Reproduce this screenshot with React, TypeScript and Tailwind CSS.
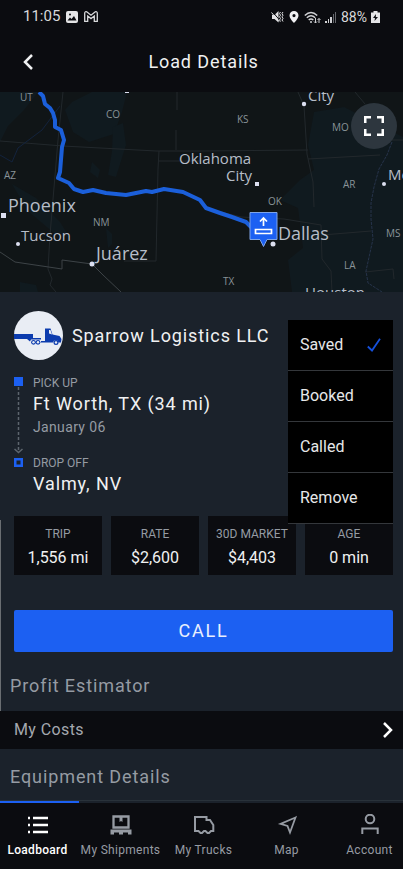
import React from "react";

const stats = [
  { label: "TRIP", value: "1,556 mi" },
  { label: "RATE", value: "$2,600" },
  { label: "30D MARKET", value: "$4,403" },
  { label: "AGE", value: "0 min" },
];

function StatusBar() {
  return (
    <div className="flex h-[34px] items-center justify-between px-[23px] text-sm text-[#d8d9db]">
      <div className="flex items-center gap-[6px]">
        <span className="text-[15px]">11:05</span>
        <svg width="12" height="12" viewBox="0 0 12 12" aria-hidden="true">
          <rect width="12" height="12" rx="2" fill="#e4e4e6" />
          <path d="M1.5 9.5 4 6.5l1.5 1.5L8 5l2.500 4.500z" fill="#0b0c10" />
          <circle cx="4" cy="3.500" r="1" fill="#0b0c10" />
        </svg>
        <svg width="14" height="11" viewBox="0 0 14 11" fill="none" stroke="#d8d9db" strokeWidth="1.300" aria-hidden="true">
          <path d="M.7 10.300V2.200C.7.700 2.100.300 3 1l4 3.200L11 1c.9-.7 2.300-.3 2.300 1.200v8.100h-3V5L7 7.600 3.700 5v5.300z" />
        </svg>
      </div>
      <div className="flex items-center gap-[4px]">
        <svg width="13" height="12" viewBox="0 0 13 12" fill="#e4e4e6" aria-hidden="true">
          <path d="M1 4h2.500L7.500 0v11.500l-4-3.500H1z" />
          <path d="M1.500.800 9 9.500" stroke="#0b0c10" strokeWidth="1" />
          <path d="M.5 1.500 8 10.500M9.500 1l-1 1.500 1 1.700-1 1.600 1 1.700-1 1.500 1 1.500M12 1l-1 1.500 1 1.700-1 1.600 1 1.700-1 1.500 1 1.500" fill="none" stroke="#e4e4e6" />
        </svg>
        <svg width="12" height="12" viewBox="0 0 12 12" aria-hidden="true">
          <path fillRule="evenodd" d="M6 0a4.500 4.500 0 0 1 4.500 4.500C10.500 7.500 6 12 6 12S1.500 7.500 1.500 4.500A4.500 4.500 0 0 1 6 0m0 3a1.600 1.600 0 1 0 0 3.200A1.600 1.600 0 0 0 6 3" fill="#f0f0f2" />
        </svg>
        <svg width="17" height="13" viewBox="0 0 17 13" fill="none" stroke="#d0d1d4" strokeWidth="1.500" aria-hidden="true">
          <path d="M.8 4.500q6.200-6 12.400 0M2.800 6.800q4.200-4 8.400 0M4.700 9q2.300-2 4.600 0M7 10v2" />
          <path d="M11.500 7v5M10 10.500l1.500 1.500 1.500-1.500M15 12V7.500M13.500 9 15 7.500 16.500 9" strokeWidth="1" />
        </svg>
        <svg width="12" height="12" viewBox="0 0 12 12" aria-hidden="true">
          <path d="M0 10h2v2H0zM3 8h1v4H3zM5 6h2v6H5z" fill="#d0d1d4" />
          <path d="M8 3h1v9H8zM10 1h1v11h-1z" fill="#66686d" />
        </svg>
        <span>88%</span>
        <svg width="9" height="12" viewBox="0 0 9 12" aria-hidden="true">
          <path d="M2.500 0h4v1.500H9V12H0V1.500h2.500z" fill="#e4e4e6" />
          <path d="M5 3 2 7h2l-.5 3L7 6H4.800z" fill="#0b0c10" />
        </svg>
      </div>
    </div>
  );
}

function LoadMap() {
  return (
    <section aria-label="Route map" className="relative h-[200px] overflow-hidden bg-[#101517]">
      <svg
        className="h-full w-full font-['Open_Sans','Noto_Sans',sans-serif]"
        viewBox="0 0 403 200"
        preserveAspectRatio="xMidYMid slice"
        role="img"
        aria-label="Route from Fort Worth to Nevada"
      >
        <g fill="#101a1f">
          <path d="M0 0h38L24 18 8 34 0 50zM72 10l20-10h35l-5 20-8 22-25 8-16-10-8-22z" />
          <path d="M113 35l10-4 3 22-10 32-8-2 4-24zM92 70l8 8-2 8-8-6zM12 92l24 14 24 24 10 16-16-5-26-22z" />
          <path d="M314 20l30-5 59 30v155H292l-4-32 15-12-5-40-18-8 20-20 14-10-6-25z" />
          <path d="M106 136l6 6v10l-4 4zM20 190l16 3 2 7H20z" />
        </g>
        <g fill="none" stroke="#22282c">
          <path d="M0 49l63 5 93 5h45l107-1M308 67l72-4M63 0l-5 48-8 95-2 34 4 10-2 6 6 7M159 59l-1 18-2 92h-32M159 69h42M177 0v18M176 38v20" />
          <path d="M298 0l6 14 3 48 6 28 1 25M209 117l32 8 43 2 37 6 1 34 9 12 1 21M322 143l49-4M365 180l28-3 1 10" />
          <path d="M0 160l15 10 47 7v-9l30 4 11 11 18 17" stroke="#3d4347" />
          <path d="M392 50l-5 13-8 14-5 18-3 16v16l2 20-7 32 2 12 14 9" stroke="#26334a" strokeDasharray="3 1" />
          <path d="M60 14L42 38 26 50 18 56 12 70 0 63" stroke="#13233d" />
          <path d="M392 48h11M355 0l10 12" />
        </g>
        <path
          d="M39 0 43 4 45 12 50 16 53 21 55 28V35L61 38 64 48 62 55 60 80 58 86 69 91 74 97 83 100 93 98 106 101 126 103 146 99 152 100 164 97 183 100 200 108 206 116 220 121 232 125 246 130 252 136"
          fill="none"
          stroke="#1b5fda"
          strokeWidth="4"
          strokeLinejoin="round"
        />
        <g fill="#899398" fontSize="10" fontWeight="500">
          <text x="20" y="9">UT</text>
          <text x="106" y="26">CO</text>
          <text x="237" y="31">KS</text>
          <text x="332" y="39">MO</text>
          <text x="4" y="87">AZ</text>
          <text x="93" y="134">NM</text>
          <text x="268" y="113">OK</text>
          <text x="343" y="96">AR</text>
          <text x="386" y="145">MS</text>
          <text x="344" y="177">LA</text>
          <text x="223" y="193">TX</text>
        </g>
        <g fill="#b6bdc8" fontSize="15" fontWeight="500">
          <text x="179" y="72">Oklahoma</text>
          <text x="226" y="89">City</text>
          <text x="308" y="9">City</text>
          <text x="388" y="88">Memphis</text>
          <text x="21" y="149">Tucson</text>
          <text x="305" y="206">Houston</text>
        </g>
        <g fill="#b6bdc8" fontSize="18" fontWeight="500">
          <text x="8" y="120">Phoenix</text>
          <text x="96" y="168">Juárez</text>
          <text x="278" y="148">Dallas</text>
        </g>
        <g fill="#dcdff0">
          <path d="M1 121h5v5H1zM255 90h4v4h-4zM125 0h4v1h-4z" />
          <circle cx="18" cy="152" r="2" />
          <circle cx="92" cy="172" r="2.500" />
          <circle cx="304" cy="12" r="2.200" />
          <circle cx="384" cy="92" r="2" />
          <circle cx="273" cy="152" r="2.500" />
        </g>
        <path d="M250 120.500h27v27h-10l-3.500 7-3.500-7h-10z" fill="#1c60f2" stroke="#7ea4e8" />
        <path d="M255.500 137.500h16v4h-16zM263.500 134v-8M260 129.500l3.500-3.500 3.500 3.500" fill="none" stroke="#fff" strokeWidth="1.700" />
      </svg>
      <button
        type="button"
        aria-label="Full screen map"
        className="absolute top-[11px] right-[6px] flex size-[46px] items-center justify-center rounded-full bg-[#2d363e]"
      >
        <svg width="20" height="20" viewBox="0 0 20 20" fill="none" stroke="#fff" strokeWidth="2.500" aria-hidden="true">
          <path d="M1.250 7V1.250H7M13 1.250h5.750V7M18.750 13v5.750H13M7 18.750H1.250V13" />
        </svg>
      </button>
    </section>
  );
}

function CarrierLogo() {
  return (
    <svg className="shrink-0" width="49" height="49" viewBox="0 0 49 49" role="img" aria-label="Truck">
      <circle cx="24.500" cy="24.500" r="24.500" fill="#e9edf4" />
      <g fill="#0c3cae">
        <path d="M0 23h19v4h8v1.500H17l-1 2-3-2.500H0zM27 30h4V17.500h5.500l2 6 7 1.500 2 3-.5 3.500h-2.500a2.800 2.800 0 0 0-5.500 0H27z" />
        <circle cx="19.500" cy="31.300" r="2.400" />
        <circle cx="24" cy="31.300" r="2.400" />
        <circle cx="42" cy="31.500" r="2.500" />
      </g>
      <g fill="#e9edf4">
        <path d="M35 19h1.500l1.500 4.500-3-1z" />
        <circle cx="19.500" cy="31.300" r="1.200" />
        <circle cx="24" cy="31.300" r="1.200" />
        <circle cx="42" cy="31.500" r="1.200" />
      </g>
    </svg>
  );
}

function StatusMenu() {
  return (
    <div role="menu" className="absolute top-[28px] right-[10px] w-[105px] bg-black text-base text-[#e6e7e8]">
      {["Saved", "Booked", "Called", "Remove"].map((item) => (
        <button
          key={item}
          type="button"
          role="menuitem"
          className="flex h-[51px] w-full items-center justify-between border-b border-[#34373b] px-3"
        >
          {item}
          {item === "Saved" && (
            <svg width="14" height="14" viewBox="0 0 14 14" fill="none" stroke="#1550dc" strokeWidth="1.800" aria-hidden="true">
              <path d="M.8 8.500 5 12.500 13 .800" />
            </svg>
          )}
        </button>
      ))}
    </div>
  );
}

function Stops() {
  return (
    <div className="mt-4 flex gap-[10px]">
      <svg className="mt-[1px] shrink-0" width="9" height="91" viewBox="0 0 9 91" fill="none" aria-hidden="true">
        <path d="M0 0h9v9H0z" fill="#1c60f2" />
        <path d="M4.500 10v65" stroke="#5d656e" strokeWidth="1.500" strokeDasharray="3 2" />
        <path d="M.5 72l4 3.500 4-3.500" stroke="#5d656e" strokeWidth="1.500" />
        <path d="M1.250 82.250h6.500v6.500h-6.500z" stroke="#1c60f2" strokeWidth="2.500" />
      </svg>
      <dl className="text-[#959ba3]">
        <dt className="text-xs leading-[14px]">PICK UP</dt>
        <dd className="mt-[2px] text-lg leading-6 tracking-wider text-[#f0f1f2]">Ft Worth, TX (34 mi)</dd>
        <dd className="text-sm leading-[22px] tracking-wide">January 06</dd>
        <dt className="mt-[18px] text-xs leading-[14px]">DROP OFF</dt>
        <dd className="mt-[2px] text-lg leading-6 tracking-wider text-[#f0f1f2]">Valmy, NV</dd>
      </dl>
    </div>
  );
}

const tabs = [
  {
    label: "Loadboard",
    icon: <path d="M1 4h2M1 11h2M1 18h2M6 4h15M6 11h15M6 18h15" strokeWidth="2.500" />,
  },
  {
    label: "My Shipments",
    icon: (
      <>
        <path d="M3.500 2.500h15v11h-15z" strokeWidth="2.300" />
        <path d="M9.500 2h3v6l-1.500-1-1.500 1zM.5 15.500h21v5H18v-2h-5v2H9v-2H4v2H.5z" fill="currentColor" stroke="none" />
      </>
    ),
  },
  {
    label: "My Trucks",
    icon: <path d="M2 3h11.500v3H17l3.300 5v6H18l-2 2h-1.500L12.500 17h-1.500l-2 2H7.500l-2-2H2z" />,
  },
  { label: "Map", icon: <path d="M19.500 3.500 4.500 9.800l7 2.200 2.500 6.500z" strokeWidth="1.800" /> },
  {
    label: "Account",
    icon: (
      <>
        <circle cx="11" cy="5" r="4.300" />
        <path d="M3.300 20v-5.500h15.400V20" />
      </>
    ),
  },
];

function TabBar() {
  return (
    <nav className="h-[66px] shrink-0 overflow-hidden bg-[#0b0c10]">
      <div className="-mr-[8px] -ml-[4px] grid grid-cols-5">
        {tabs.map((tab, i) => (
          <a
            key={tab.label}
            href="#"
            className={
              i === 0
                ? "flex flex-col items-center pt-[11px] font-medium text-white"
                : "flex flex-col items-center pt-[11px] text-[#969ba3]"
            }
          >
            <svg width="22" height="22" viewBox="0 0 22 22" fill="none" stroke="currentColor" strokeWidth="2" aria-hidden="true">
              {tab.icon}
            </svg>
            <span className="mt-[6px] text-xs tracking-wide whitespace-nowrap">{tab.label}</span>
          </a>
        ))}
      </div>
    </nav>
  );
}

export default function App() {
  return (
    <div className="flex min-h-screen flex-col bg-[#1b222b] font-[Roboto,sans-serif]">
      <div className="bg-[#0b0c10]">
        <StatusBar />
        <header className="grid h-[58px] grid-cols-[56px_1fr_52px] items-center pb-[2px] text-[#f0f1f2]">
          <button type="button" aria-label="Back" className="flex justify-center">
            <svg width="10" height="16" viewBox="0 0 10 16" fill="none" stroke="currentColor" strokeWidth="2.500" aria-hidden="true">
              <path d="M9 1 2 8l7 7" />
            </svg>
          </button>
          <h1 className="text-center text-lg tracking-wider">Load Details</h1>
        </header>
      </div>
      <LoadMap />
      <main className="relative grow">
        <div className="pt-[19px] pr-[10px] pl-[14px]">
          <div className="flex items-center gap-[9px]">
            <CarrierLogo />
            <h2 className="text-lg tracking-wider text-[#f0f1f2]">Sparrow Logistics LLC</h2>
          </div>
          <Stops />
          <dl className="mt-5 grid grid-cols-4 gap-[9px]">
            {stats.map((s) => (
              <div key={s.label} className="flex h-[59px] flex-col items-center bg-[#0b0c10] pt-[10px]">
                <dt className="text-xs leading-4 text-[#959ba3]">{s.label}</dt>
                <dd className="mt-1 text-base leading-6 text-[#f0f1f2]">{s.value}</dd>
              </div>
            ))}
          </dl>
          <button type="button" className="mt-[35px] h-[42px] w-full rounded-xs bg-[#1c60f2] text-lg tracking-widest text-[#e9effd]">
            CALL
          </button>
        </div>
        <h2 className="flex h-[59px] items-center px-[10px] pt-2 text-lg tracking-wider text-[#959ba3]">Profit Estimator</h2>
        <button type="button" className="flex h-[38px] w-full items-center justify-between bg-[#0b0c10] pr-[10px] pl-[14px] text-base tracking-wide text-[#a4a8af]">
          My Costs
          <svg width="10" height="16" viewBox="0 0 10 16" fill="none" stroke="#fff" strokeWidth="2.500" aria-hidden="true">
            <path d="M1 1l7 7-7 7" />
          </svg>
        </button>
        <h2 className="flex h-[52px] items-center border-b border-[#29323a] px-[10px] pt-1 text-lg tracking-wider text-[#959ba3]">
          Equipment Details
        </h2>
        <StatusMenu />
        <div className="absolute top-[228px] left-0 h-[191px] w-px bg-[#6a6e72]" />
      </main>
      <div className="h-[2px] bg-[#1b222b]">
        <div className="h-full w-[79px] bg-[#1c60f2]" />
      </div>
      <TabBar />
    </div>
  );
}
